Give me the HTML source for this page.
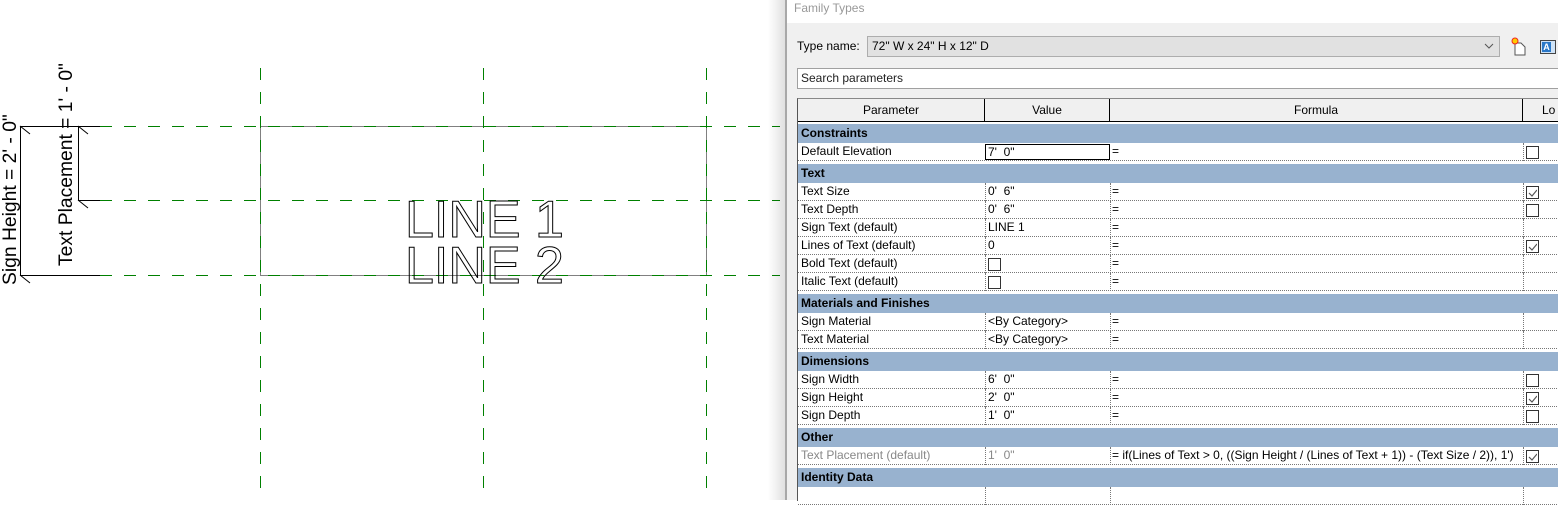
<!DOCTYPE html>
<html><head><style>
body{margin:0;width:1558px;height:500px;overflow:hidden;background:#fff;position:relative;font-family:"Liberation Sans",Arial,sans-serif}
.dlg{position:absolute;left:785px;top:0;width:773px;height:500px;background:#f0f0f0;border-left:2px solid #a8a8a8;box-sizing:border-box}
.shadow{position:absolute;left:768px;top:0;width:17px;height:500px;background:linear-gradient(to right,rgba(0,0,0,0),rgba(0,0,0,0.12))}
.title{position:absolute;left:0;top:0;right:0;height:23px;background:#fff;color:#999;font-size:12px;line-height:16px;padding-left:7px}
.abs{position:absolute}
.t{font-size:12px;color:#000;white-space:nowrap}
.grid{position:absolute;left:10px;top:98px;width:763px;height:402px;background:#fff;border-left:1px solid #555;border-top:1px solid #888}
.hdr{position:absolute;top:0;height:23px;border-bottom:1px solid #000;background:#f0f0f0;font-size:12px;line-height:23px;text-align:center;box-sizing:border-box}
.band{position:absolute;left:0;width:763px;height:19px;background:#98b2cf;font-weight:bold;font-size:12px;line-height:19px;padding-left:3px;box-sizing:border-box}
.row{position:absolute;left:0;width:763px;height:18px;border-bottom:1px dotted #777;box-sizing:border-box;font-size:12px;line-height:17px}
.row span{position:absolute;top:0}
.vl{position:absolute;top:0;height:18px;border-left:1px dotted #777}
.cb{position:absolute;width:11px;height:11px;border:1px solid #333;background:#fff;top:3px}
.ck{position:absolute;left:1px;top:1px}
</style></head><body>
<svg class="abs" style="left:0;top:0" width="785" height="500">
<rect x="260.5" y="126.5" width="446" height="149" fill="none" stroke="#808080" stroke-width="1"/>
<g stroke="#008000" stroke-width="1" stroke-dasharray="12,12" fill="none">
<line x1="100" y1="126.5" x2="780" y2="126.5"/>
<line x1="100" y1="200.5" x2="780" y2="200.5"/>
<line x1="100" y1="275.5" x2="780" y2="275.5"/>
<line x1="260.5" y1="68" x2="260.5" y2="500"/>
<line x1="483.5" y1="68" x2="483.5" y2="500"/>
<line x1="706.5" y1="68" x2="706.5" y2="500"/>
</g>
<g stroke="#000" stroke-width="1">
<line x1="20.5" y1="126" x2="20.5" y2="275"/>
<line x1="20" y1="126.5" x2="100" y2="126.5"/>
<line x1="20" y1="275.5" x2="100" y2="275.5"/>
<line x1="78.5" y1="126" x2="78.5" y2="200"/>
<line x1="78" y1="126.5" x2="100" y2="126.5"/>
<line x1="78" y1="200.5" x2="100" y2="200.5"/>
<line x1="20" y1="126" x2="30" y2="134"/>
<line x1="20" y1="275" x2="30" y2="283"/>
<line x1="78" y1="126" x2="88" y2="134"/>
<line x1="78" y1="200" x2="88" y2="208"/>
</g>
<text transform="translate(16,285) rotate(-90)" font-family="Liberation Sans" font-size="19.3" fill="#000">Sign Height = 2' - 0"</text>
<text transform="translate(72,266) rotate(-90)" font-family="Liberation Sans" font-size="19.3" fill="#000">Text Placement = 1' - 0"</text>
<text x="405" y="237" font-family="Liberation Sans" font-size="52" fill="none" stroke="#000" stroke-width="1">LINE 1</text>
<text x="405" y="283" font-family="Liberation Sans" font-size="52" fill="none" stroke="#000" stroke-width="1">LINE 2</text>
</svg>
<div class="shadow"></div>
<div class="dlg">
<div class="title">Family Types</div>
<div class="abs t" style="left:10px;top:39px">Type name:</div>
<div class="abs" style="left:80px;top:36px;width:633px;height:21px;background:#e1e1e1;border:1px solid #adadad;box-sizing:border-box;font-size:12px;line-height:19px;padding-left:4px">72" W x 24" H x 12" D<svg style="position:absolute;right:5px;top:6px" width="10" height="7"><path d="M1 1l4 4 4-4" fill="none" stroke="#555"/></svg></div>
<svg class="abs" style="left:722px;top:36px" width="20" height="20"><path d="M6 7h6l4 4v8H6z" fill="#fff" stroke="#555"/><circle cx="6" cy="5" r="3" fill="#fc0" stroke="#e22" stroke-width="1"/></svg>
<div class="abs" style="left:753px;top:40px;width:14px;height:12px;border:1px solid #444;background:#cfe3f7"><div style="position:absolute;left:1px;top:1px;width:9px;height:10px;background:#2a78c8;color:#fff;font-size:9px;font-weight:bold;line-height:10px;text-align:center">A</div></div>
<div class="abs" style="left:10px;top:68px;width:763px;height:21px;background:#fff;border:1px solid #a0a0a0;border-right:none;box-sizing:border-box;font-size:12px;line-height:19px;padding-left:3px;color:#222">Search parameters</div>
<div class="grid">
<div class="hdr" style="left:0;width:187px;border-right:1px solid #000">Parameter</div>
<div class="hdr" style="left:187px;width:125px;border-right:1px solid #000">Value</div>
<div class="hdr" style="left:312px;width:413px;border-right:1px solid #000">Formula</div>
<div class="hdr" style="left:725px;width:40px;text-align:left;padding-left:19px">Lo</div>

<div class="band" style="top:25px">Constraints</div>
<div class="row" style="top:44px"><span style="left:3px">Default Elevation</span><div class="abs" style="left:187px;top:1px;width:125px;height:16px;border:1px solid #000;box-sizing:border-box;padding-left:2px;line-height:14px">7'&nbsp; 0"</div><span style="left:314px">=</span><div class="vl" style="left:725px"></div><div class="cb" style="left:728px"></div></div>

<div class="band" style="top:65px">Text</div>
<div class="row" style="top:84px"><span style="left:3px">Text Size</span><div class="vl" style="left:187px"></div><span style="left:190px">0'&nbsp; 6"</span><div class="vl" style="left:312px"></div><span style="left:314px">=</span><div class="vl" style="left:725px"></div><div class="cb" style="left:728px"><svg class="ck" width="9" height="9"><path d="M1 5l3 3 5-6" fill="none" stroke="#555" stroke-width="1.2"/></svg></div></div>
<div class="row" style="top:102px"><span style="left:3px">Text Depth</span><div class="vl" style="left:187px"></div><span style="left:190px">0'&nbsp; 6"</span><div class="vl" style="left:312px"></div><span style="left:314px">=</span><div class="vl" style="left:725px"></div><div class="cb" style="left:728px"></div></div>
<div class="row" style="top:120px"><span style="left:3px">Sign Text (default)</span><div class="vl" style="left:187px"></div><span style="left:190px">LINE 1</span><div class="vl" style="left:312px"></div><span style="left:314px">=</span><div class="vl" style="left:725px"></div></div>
<div class="row" style="top:138px"><span style="left:3px">Lines of Text (default)</span><div class="vl" style="left:187px"></div><span style="left:190px">0</span><div class="vl" style="left:312px"></div><span style="left:314px">=</span><div class="vl" style="left:725px"></div><div class="cb" style="left:728px"><svg class="ck" width="9" height="9"><path d="M1 5l3 3 5-6" fill="none" stroke="#555" stroke-width="1.2"/></svg></div></div>
<div class="row" style="top:156px"><span style="left:3px">Bold Text (default)</span><div class="vl" style="left:187px"></div><div class="cb" style="left:190px"></div><div class="vl" style="left:312px"></div><span style="left:314px">=</span><div class="vl" style="left:725px"></div></div>
<div class="row" style="top:174px"><span style="left:3px">Italic Text (default)</span><div class="vl" style="left:187px"></div><div class="cb" style="left:190px"></div><div class="vl" style="left:312px"></div><span style="left:314px">=</span><div class="vl" style="left:725px"></div></div>

<div class="band" style="top:195px">Materials and Finishes</div>
<div class="row" style="top:214px"><span style="left:3px">Sign Material</span><div class="vl" style="left:187px"></div><span style="left:190px">&lt;By Category&gt;</span><div class="vl" style="left:312px"></div><span style="left:314px">=</span><div class="vl" style="left:725px"></div></div>
<div class="row" style="top:232px"><span style="left:3px">Text Material</span><div class="vl" style="left:187px"></div><span style="left:190px">&lt;By Category&gt;</span><div class="vl" style="left:312px"></div><span style="left:314px">=</span><div class="vl" style="left:725px"></div></div>

<div class="band" style="top:253px">Dimensions</div>
<div class="row" style="top:272px"><span style="left:3px">Sign Width</span><div class="vl" style="left:187px"></div><span style="left:190px">6'&nbsp; 0"</span><div class="vl" style="left:312px"></div><span style="left:314px">=</span><div class="vl" style="left:725px"></div><div class="cb" style="left:728px"></div></div>
<div class="row" style="top:290px"><span style="left:3px">Sign Height</span><div class="vl" style="left:187px"></div><span style="left:190px">2'&nbsp; 0"</span><div class="vl" style="left:312px"></div><span style="left:314px">=</span><div class="vl" style="left:725px"></div><div class="cb" style="left:728px"><svg class="ck" width="9" height="9"><path d="M1 5l3 3 5-6" fill="none" stroke="#555" stroke-width="1.2"/></svg></div></div>
<div class="row" style="top:308px"><span style="left:3px">Sign Depth</span><div class="vl" style="left:187px"></div><span style="left:190px">1'&nbsp; 0"</span><div class="vl" style="left:312px"></div><span style="left:314px">=</span><div class="vl" style="left:725px"></div><div class="cb" style="left:728px"></div></div>

<div class="band" style="top:329px">Other</div>
<div class="row" style="top:348px;color:#888"><span style="left:3px">Text Placement (default)</span><div class="vl" style="left:187px"></div><span style="left:190px">1'&nbsp; 0"</span><div class="vl" style="left:312px"></div><span style="left:314px;color:#000">= if(Lines of Text &gt; 0, ((Sign Height / (Lines of Text + 1)) - (Text Size / 2)), 1')</span><div class="vl" style="left:725px"></div><div class="cb" style="left:728px"><svg class="ck" width="9" height="9"><path d="M1 5l3 3 5-6" fill="none" stroke="#555" stroke-width="1.2"/></svg></div></div>

<div class="band" style="top:369px">Identity Data</div>
<div class="row" style="top:388px"><div class="vl" style="left:187px"></div><div class="vl" style="left:312px"></div><div class="vl" style="left:725px"></div></div>
</div>
</div>
</body></html>
